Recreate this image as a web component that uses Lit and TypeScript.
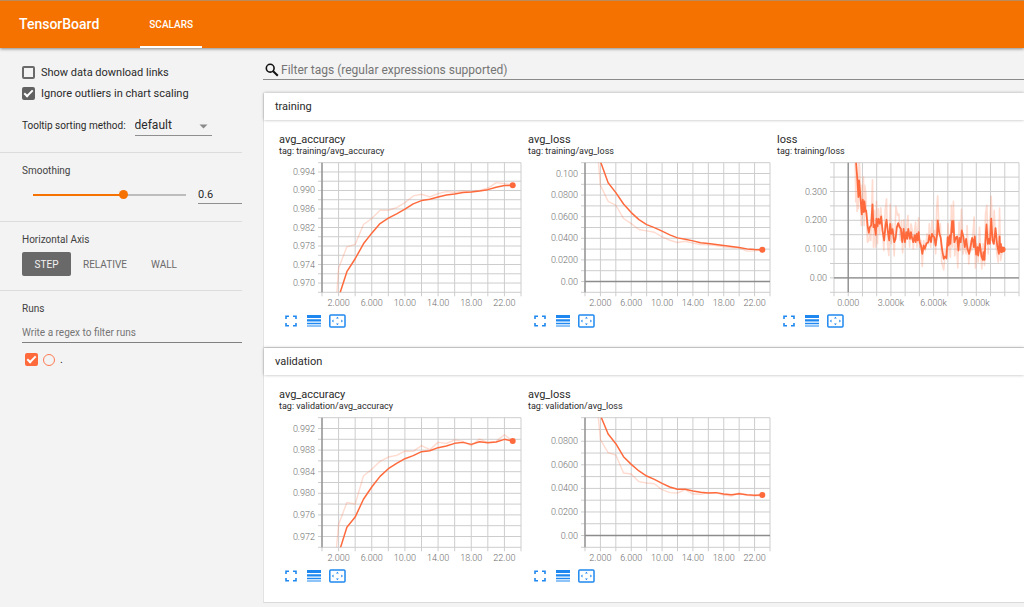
import { LitElement, html, svg, css } from "lit";
import { customElement, property, state } from "lit/decorators.js";
import { classMap } from "lit/directives/class-map.js";

type Point = [number, number];

interface ChartSpec {
  title: string;
  tag: string;
  left: number;
  dense?: boolean;
  x: { min: number; max: number; step: number; labels: [number, string][] };
  y: { min: number; max: number; step: number; labels: [number, string][] };
  smooth: Point[];
  raw: Point[];
}

/** Pairs one value per epoch with its step number. */
const epochs = (values: number[]): Point[] => values.map((v, i) => [i + 1, v]);

/** Unpacks "x,y x,y" loss samples into [thousand steps, loss]. */
const unpack = (text: string): Point[] =>
  text
    .trim()
    .split(/\s+/)
    .map((pair) => {
      const [x, y] = pair.split(",").map(Number);
      return [(x - 235.5) * 0.0235, (442 - y) * 0.00116] as Point;
    });

const LOSS_SMOOTH = unpack(`
  257,60 260,110 263,150 266,200 268,150 272,200 276,252 279,208 282,245 284,213 287,243 289,240 294,290 297,307
  300,290 304,285 308,222 311,290 314,283 318,313 320,265 323,288 326,265 330,280 334,258 338,300 343,330
  347,285 350,268 355,310 358,330 361,280 364,310 368,296 373,335 377,325 381,290 385,278 389,290 393,295
  397,335 401,295 405,335 409,305 412,325 415,295 420,325 423,305 426,322 430,335 434,315 437,335 440,310
  443,330 446,305 449,335 453,345 457,370 461,345 464,355 470,338 475,335 478,315 483,335 486,310 490,318
  493,320 497,345 501,315 503,270 508,310 512,322 516,355 521,385 525,378 529,383 533,320 536,345 539,315
  541,340 546,272 547,305 550,272 553,335 558,320 561,318 565,360 568,322 572,335 575,300 580,320 584,350
  588,325 592,355 597,370 602,345 606,322 609,330 611,350 614,318 618,372 622,350 624,375 629,340 634,378
  638,388 640,365 643,388 647,310 649,282 653,340 656,325 659,340 663,265 667,330 671,340 676,293 681,345
  686,370 688,318 690,364 692,340 694,365 697,357`);

const LOSS_RAW = unpack(`
  256,60 258,215 260,130 262,243 264,180 266,235 268,80 270,120 273,230 275,285 277,165 279,250 281,140
  283,285 285,165 288,190 290,260 293,335 297,330 300,300 303,330 308,148 311,350 314,240 317,350 320,213
  323,340 326,235 330,310 333,232 337,290 342,360 346,240 350,205 353,340 357,375 361,222 364,340 368,280
  373,376 378,228 383,255 387,250 391,330 395,270 398,367 402,268 406,350 410,290 414,255 419,350 423,280
  427,300 430,355 434,300 437,275 441,350 446,262 449,350 453,330 457,408 461,330 466,360 471,310 475,340
  478,280 482,350 486,270 491,340 494,300 497,370 500,235 503,196 507,300 511,280 515,395 521,418 526,360
  530,386 534,280 537,350 541,380 544,225 547,350 550,213 554,376 559,320 563,412 567,275 571,360 574,237
  579,370 584,345 588,370 591,285 596,400 601,330 605,360 612,260 616,412 620,340 624,395 628,290 632,370
  635,415 639,340 643,405 646,250 650,225 654,370 658,290 663,198 668,340 672,240 676,330 680,370 684,395
  688,233 691,390 697,357`);

const EPOCH_AXIS = {
  min: 0,
  max: 24,
  step: 2,
  labels: [
    [2, "2.000"], [6, "6.000"], [10, "10.00"], [14, "14.00"], [18, "18.00"], [22, "22.00"],
  ] as [number, string][],
};

const GROUPS: { name: string; charts: ChartSpec[] }[] = [
  {
    name: "training",
    charts: [
      {
        title: "avg_accuracy",
        tag: "training/avg_accuracy",
        left: 43,
        x: EPOCH_AXIS,
        y: {
          min: 0.968, max: 0.996, step: 0.002,
          labels: [[0.994, "0.994"], [0.99, "0.990"], [0.986, "0.986"], [0.982, "0.982"], [0.978, "0.978"], [0.974, "0.974"], [0.97, "0.970"]],
        },
        smooth: epochs([0.947, 0.9669, 0.97245, 0.97525, 0.97848, 0.98078, 0.98286, 0.98401, 0.98494, 0.98595, 0.9871, 0.98781, 0.9881, 0.9886, 0.98904, 0.98925, 0.98954, 0.98968, 0.9899, 0.99018, 0.99069, 0.99105, 0.99112]),
        raw: epochs([0.947, 0.97317, 0.97783, 0.97834, 0.98265, 0.98394, 0.98573, 0.98573, 0.98631, 0.98738, 0.98882, 0.98918, 0.9886, 0.98932, 0.98975, 0.9896, 0.9899, 0.98975, 0.99, 0.99047, 0.99169, 0.99148, 0.9912]),
      },
      {
        title: "avg_loss",
        tag: "training/avg_loss",
        left: 57,
        x: EPOCH_AXIS,
        y: {
          min: -0.01, max: 0.11, step: 0.01,
          labels: [[0.1, "0.100"], [0.08, "0.0800"], [0.06, "0.0600"], [0.04, "0.0400"], [0.02, "0.0200"], [0, "0.00"]],
        },
        smooth: epochs([0.15, 0.1112, 0.0915, 0.0823, 0.0718, 0.0638, 0.0573, 0.0527, 0.0499, 0.0466, 0.0432, 0.0404, 0.0392, 0.0376, 0.0358, 0.0352, 0.0342, 0.0333, 0.0324, 0.0315, 0.0302, 0.0296, 0.0293]),
        raw: epochs([0.17, 0.089, 0.0743, 0.0706, 0.0583, 0.0536, 0.0481, 0.0469, 0.0456, 0.0413, 0.0382, 0.0361, 0.0373, 0.0355, 0.0342, 0.0339, 0.0333, 0.0321, 0.0315, 0.0312, 0.0281, 0.0284, 0.0293]),
      },
      {
        title: "loss",
        tag: "training/loss",
        left: 57,
        dense: true,
        x: { min: -1, max: 12, step: 1, labels: [[0, "0.000"], [3, "3.000k"], [6, "6.000k"], [9, "9.000k"]] },
        y: {
          min: -0.05, max: 0.4, step: 0.05,
          labels: [[0.3, "0.300"], [0.2, "0.200"], [0.1, "0.100"], [0, "0.00"]],
        },
        smooth: LOSS_SMOOTH,
        raw: LOSS_RAW,
      },
    ],
  },
  {
    name: "validation",
    charts: [
      {
        title: "avg_accuracy",
        tag: "validation/avg_accuracy",
        left: 43,
        x: EPOCH_AXIS,
        y: {
          min: 0.97, max: 0.994, step: 0.002,
          labels: [[0.992, "0.992"], [0.988, "0.988"], [0.984, "0.984"], [0.98, "0.980"], [0.976, "0.976"], [0.972, "0.972"]],
        },
        smooth: epochs([0.9575, 0.9688, 0.9737, 0.9756, 0.9789, 0.98117, 0.98314, 0.98456, 0.98555, 0.98641, 0.98697, 0.98771, 0.98789, 0.98845, 0.98876, 0.98925, 0.98943, 0.98906, 0.98956, 0.98937, 0.9895, 0.98999, 0.98968]),
        raw: epochs([0.9575, 0.9742, 0.9783, 0.978, 0.9832, 0.98444, 0.98592, 0.98672, 0.98703, 0.98783, 0.98777, 0.98882, 0.98808, 0.98943, 0.98925, 0.98987, 0.98962, 0.98882, 0.99005, 0.98943, 0.98962, 0.99085, 0.98968]),
      },
      {
        title: "avg_loss",
        tag: "validation/avg_loss",
        left: 57,
        x: EPOCH_AXIS,
        y: {
          min: -0.01, max: 0.1, step: 0.01,
          labels: [[0.08, "0.0800"], [0.06, "0.0600"], [0.04, "0.0400"], [0.02, "0.0200"], [0, "0.00"]],
        },
        smooth: epochs([0.13, 0.102, 0.0861, 0.0779, 0.0669, 0.0604, 0.0548, 0.0505, 0.0477, 0.0443, 0.0412, 0.0392, 0.0392, 0.0378, 0.0367, 0.0361, 0.0364, 0.0352, 0.0347, 0.0355, 0.0347, 0.0341, 0.0344]),
        raw: epochs([0.15, 0.0813, 0.0703, 0.0683, 0.0531, 0.0522, 0.0457, 0.0446, 0.044, 0.0389, 0.0364, 0.0361, 0.0389, 0.0352, 0.035, 0.0364, 0.0364, 0.0344, 0.0335, 0.0361, 0.0341, 0.0335, 0.0344]),
      },
    ],
  },
];

const PLOT = { right: 242, top: 6.7, bottom: 136.3 };

@customElement("scalar-chart")
class ScalarChart extends LitElement {
  @property({ attribute: false }) spec!: ChartSpec;

  static styles = css`
    :host { display: block; width: 242px; }
    .title { margin: 0; font-size: 11px; line-height: 12px; font-weight: 400; color: #2a2a2a; }
    .tag { margin: 0; font-size: 9px; line-height: 10px; color: #2a2a2a; }
    .plot { display: block; width: 100%; height: 153px; overflow: visible; }
    .grid { stroke: #cdcdcd; stroke-width: 1; fill: none; }
    .axis { stroke: #8c8c8c; stroke-width: 1.3; fill: none; }
    .tick { font: 300 9px Roboto, sans-serif; fill: #6c6c6c; }
    .end { text-anchor: end; }
    .mid { text-anchor: middle; }
    .raw { fill: none; stroke: #ff7043; stroke-opacity: 0.25; stroke-width: 1.4; stroke-linejoin: round; }
    .smooth { fill: none; stroke: #ff6a3d; stroke-width: 1.5; stroke-linejoin: round; }
    .dense .raw { stroke-width: 1.6; }
    .dense .smooth { stroke-width: 1.8; }
    .dot { fill: #ff6a3d; }
    .tools { display: flex; align-items: center; gap: 8px; padding: 5px 0 0 4px; }
    .tool { display: block; padding: 0; border: 0; background: none; height: 14px; color: #1e88f0; }
    .glyph { display: block; }
  `;

  render() {
    const s = this.spec;
    const { right, top, bottom } = PLOT;
    const px = (v: number) => s.left + ((v - s.x.min) / (s.x.max - s.x.min)) * (right - s.left);
    const py = (v: number) => bottom - ((v - s.y.min) / (s.y.max - s.y.min)) * (bottom - top);
    const range = (a: { min: number; max: number; step: number }) =>
      Array.from({ length: Math.round((a.max - a.min) / a.step) + 1 }, (_, i) => a.min + i * a.step);
    const path = (pts: Point[]) => pts.map(([x, y]) => `${px(x).toFixed(2)},${py(y).toFixed(2)}`).join(" ");
    const last = s.smooth[s.smooth.length - 1];
    const clip = `M${s.left} ${top}H${right + 5}V${bottom}H${s.left}Z`;
    return html`
      <h3 class="title">${s.title}</h3>
      <p class="tag">tag: ${s.tag}</p>
      <svg class=${classMap({ plot: true, dense: !!s.dense })} role="img" aria-label=${s.tag}>
        <clipPath id="area"><path d=${clip} /></clipPath>
        ${range(s.x).map((v) => svg`<path class="grid" d="M${px(v)} ${top}V${bottom + 4}" />`)}
        ${range(s.y).map((v) => svg`<path class="grid" d="M${s.left - 4} ${py(v)}H${right}" />`)}
        <path class="axis" d="M${px(0)} ${top}V${bottom}" />
        ${s.y.min < 0 ? svg`<path class="axis" d="M${s.left} ${py(0)}H${right}" />` : null}
        ${s.y.labels.map(([v, t]) => svg`<text class="tick end" x=${s.left - 7} y=${py(v) + 3}>${t}</text>`)}
        ${s.x.labels.map(([v, t]) => svg`<text class="tick mid" x=${px(v)} y=${bottom + 14}>${t}</text>`)}
        <g clip-path="url(#area)">
          <polyline class="raw" points=${path(s.raw)} />
          <polyline class="smooth" points=${path(s.smooth)} />
        </g>
        <circle class="dot" cx=${px(last[0])} cy=${py(last[1])} r="3" />
      </svg>
      <div class="tools">
        <button class="tool" aria-label="Toggle full size">
          <svg class="glyph" width="16" height="14" viewBox="0 0 16 14" fill="none" stroke="currentColor" stroke-width="1.6">
            <path d="M3 5V2.3H6M10 2.3H13V5M13 9V11.7H10M6 11.7H3V9" />
          </svg>
        </button>
        <button class="tool" aria-label="Toggle y-axis log scale">
          <svg class="glyph" width="14" height="14" viewBox="0 0 14 14" fill="currentColor">
            <path d="M0 1H14V4H0ZM0 5.2H14V7.4H0ZM0 8.7H14V10.3H0ZM0 11.6H14V12.6H0Z" />
          </svg>
        </button>
        <button class="tool" aria-label="Fit domain to data">
          <svg class="glyph" width="17" height="14" viewBox="0 0 17 14">
            <rect x="0.8" y="1.1" width="15.2" height="11.8" rx="1" fill="none" stroke="currentColor" stroke-width="1.5" />
            <path fill="currentColor" d="M8.4 2.8L9.8 4.5H7ZM8.4 11.2L7 9.5H9.8ZM2.8 7L4.5 5.6V8.4ZM14 7L12.3 8.4V5.6Z" />
          </svg>
        </button>
      </div>
    `;
  }
}

@customElement("app-root")
class AppRoot extends LitElement {
  @state() private axis = "STEP";

  static styles = css`
    :host {
      display: flex; flex-direction: column; min-height: 100vh; overflow-x: clip;
      background: #f3f3f3; color: #2a2a2a; font-family: Roboto, sans-serif; font-size: 11px;
    }
    *, *::before, *::after { box-sizing: border-box; }
    input, select, button { font-family: inherit; color: inherit; margin: 0; border-radius: 0; }

    .bar {
      display: flex; align-items: stretch; height: 48px; padding-left: 19px; gap: 41px;
      background: #f57100; color: #fff; border-top: 1px solid #b98a5c;
      box-shadow: 0 1px 3px rgba(0, 0, 0, 0.45); z-index: 1;
    }
    .brand { margin: 0; font-size: 14px; line-height: 46px; font-weight: 500; }
    .tab {
      padding: 0 9px; color: inherit; text-decoration: none; font-size: 10px; line-height: 47px;
      font-weight: 500; border-bottom: 2px solid #fff;
    }

    .body { display: flex; flex: 1; gap: 21px; }
    .side { width: 242px; flex: none; }
    .section { display: flex; flex-direction: column; padding: 11px 0 0 22px; border-bottom: 1px solid #dcdcdc; }
    .options { padding-top: 18px; padding-bottom: 16px; gap: 8px; }
    .smoothing { padding-bottom: 17px; gap: 7px; }
    .horizontal { padding-bottom: 14px; gap: 5px; }
    .runs { gap: 7px; border-bottom: 0; }
    .heading { margin: 0; font-size: 10px; line-height: 14px; font-weight: 400; color: #424242; }

    .check { display: flex; align-items: center; gap: 6px; line-height: 13px; }
    .box {
      appearance: none; display: grid; place-content: center; width: 13px; height: 13px; flex: none;
      border: 2px solid #6a6a6a; border-radius: 2px;
    }
    .box:checked { background: #616161; border-color: #616161; }
    .box:checked::after {
      content: ""; width: 5px; height: 9px; margin-top: -2px; border: solid #fff; border-width: 0 2px 2px 0;
      transform: rotate(45deg);
    }
    .box.run { border-color: #ff6a3d; }
    .box.run:checked { background: #ff6a3d; }

    .field { display: flex; align-items: center; gap: 9px; padding-top: 8px; }
    .caption { font-size: 10px; line-height: 20px; }
    .pick { display: grid; width: 77px; align-items: center; }
    .select {
      grid-area: 1 / 1; appearance: none; width: 100%; height: 20px; padding: 0 16px 1px 0; border: 0;
      border-bottom: 1px solid #8f8f8f; background: none; font-size: 12px; line-height: 18px;
    }
    .caret { grid-area: 1 / 1; justify-self: end; margin-right: 4px; pointer-events: none; }

    .slide { display: flex; align-items: center; gap: 12px; padding-left: 11px; }
    .range { appearance: none; flex: 1; min-width: 0; height: 10px; background: none; }
    .range::-webkit-slider-runnable-track { height: 2px; background: linear-gradient(to right, #f57100 60%, #bdbdbd 60%); }
    .range::-webkit-slider-thumb {
      appearance: none; width: 9px; height: 9px; margin-top: -4px; border-radius: 50%; background: #f57100;
    }
    .amount {
      width: 44px; height: 19px; padding: 0; border: 0; border-bottom: 1px solid #8f8f8f; background: none; font-size: 11px;
    }

    .modes { display: flex; }
    .mode {
      min-width: 49px; height: 24px; padding: 0 12px; border: 0; border-radius: 2px; background: none;
      color: #6a6a6a; font-size: 10px;
    }
    .mode.on { background: #696969; color: #f3f3f3; }

    .regex {
      width: 100%; height: 20px; padding: 0; border: 0; border-bottom: 1px solid #808080; background: none; font-size: 10px;
    }
    .regex::placeholder, .query::placeholder { color: #757575; opacity: 1; }
    .runrow { display: flex; align-items: center; padding: 3px 0 0 3px; gap: 5px; }
    .ring { width: 12px; height: 12px; border: 1.5px solid #ff7a52; border-radius: 50%; }

    .main { flex: 1; min-width: 0; }
    .filter {
      display: flex; align-items: center; height: 20px; margin: 12px 0 13px; padding-left: 2px; gap: 2px;
      border-bottom: 1px solid #8a8a8a;
    }
    .query { flex: 1; min-width: 0; padding: 0; border: 0; background: none; font-size: 12px; line-height: 18px; }
    .group { background: #fff; border-left: 1px solid #e2e2e2; border-bottom: 1px solid #dadada; }
    .name {
      margin: 0; padding-left: 11px; font-size: 11px; line-height: 27px; font-weight: 400; background: #fff;
      box-shadow: 0 0 3px rgba(0, 0, 0, 0.3);
    }
    .charts { display: flex; flex-wrap: wrap; gap: 7px; padding: 14px 0 19px 15px; }
  `;

  render() {
    return html`
      <header class="bar">
        <h1 class="brand">TensorBoard</h1>
        <a class="tab" href="#scalars">SCALARS</a>
      </header>
      <div class="body">
        <aside class="side">
          <section class="section options">
            <label class="check"><input class="box" type="checkbox" />Show data download links</label>
            <label class="check"><input class="box" type="checkbox" checked />Ignore outliers in chart scaling</label>
            <div class="field">
              <label class="caption" for="sort">Tooltip sorting method:</label>
              <span class="pick">
                <select class="select" id="sort"><option>default</option></select>
                <svg class="caret" width="9" height="5" viewBox="0 0 9 5"><path d="M0.5 0.5H8.5L4.5 4.5Z" fill="#8a8a8a" /></svg>
              </span>
            </div>
          </section>
          <section class="section smoothing">
            <h2 class="heading">Smoothing</h2>
            <div class="slide">
              <input class="range" type="range" min="0" max="1" step="0.1" value="0.6" aria-label="Smoothing" />
              <input class="amount" type="text" value="0.6" aria-label="Smoothing value" />
            </div>
          </section>
          <section class="section horizontal">
            <h2 class="heading">Horizontal Axis</h2>
            <div class="modes">
              ${["STEP", "RELATIVE", "WALL"].map(
                (m) => html`<button class=${classMap({ mode: true, on: m === this.axis })} @click=${() => (this.axis = m)}>${m}</button>`,
              )}
            </div>
          </section>
          <section class="section runs">
            <label class="heading" for="runs">Runs</label>
            <input class="regex" id="runs" type="text" placeholder="Write a regex to filter runs" />
            <label class="runrow"><input class="box run" type="checkbox" checked /><span class="ring"></span>.</label>
          </section>
        </aside>
        <main class="main">
          <label class="filter">
            <svg width="14" height="14" viewBox="0 0 14 14" fill="none" stroke="#111">
              <circle cx="5.2" cy="5.2" r="3.9" stroke-width="1.6" />
              <path d="M8.2 8.2L12.8 12.8" stroke-width="2" />
            </svg>
            <input class="query" type="text" placeholder="Filter tags (regular expressions supported)" />
          </label>
          ${GROUPS.map(
            (g) => html`
              <section class="group">
                <h2 class="name">${g.name}</h2>
                <div class="charts">${g.charts.map((c) => html`<scalar-chart .spec=${c}></scalar-chart>`)}</div>
              </section>
            `,
          )}
        </main>
      </div>
    `;
  }
}
